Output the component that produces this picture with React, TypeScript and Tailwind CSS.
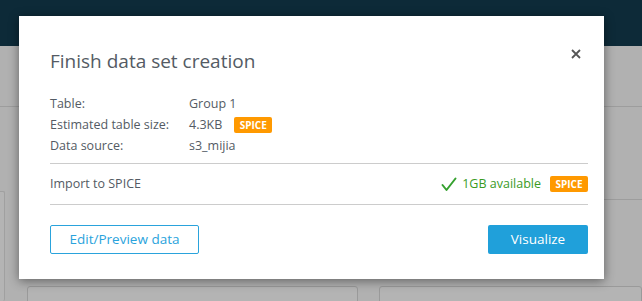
import React from "react";

const font = { fontFamily: '"Open Sans", "Noto Sans", Arial, sans-serif' };

function SpiceBadge() {
  return (
    <span className="inline-flex h-[16px] w-[38px] items-center justify-center rounded-[2px] bg-[#ff9900] text-[10px] font-bold leading-none text-white">
      SPICE
    </span>
  );
}

function CheckIcon() {
  return (
    <svg width="16" height="15" viewBox="0 0 16 15" fill="none">
      <path d="M1.5 8 L5.5 13 L14.5 1.5" stroke="#35a12f" strokeWidth="2" strokeLinecap="round" strokeLinejoin="round" />
    </svg>
  );
}

export default function App() {
  return (
    <div className="relative h-[301px] w-[642px] overflow-hidden bg-[#b1b1b1]" style={font}>
      {/* page behind the overlay */}
      <div className="h-[46px] bg-[#0d2a38]" />
      <div className="flex flex-col">
        <div className="h-[61px] border-b border-[#9d9d9d] bg-[#b1b1b1]" />
        <div className="flex h-[93px]">
          <div className="flex-1" />
          <div className="w-[40px] border-b border-[#9d9d9d]" />
        </div>
        <div className="flex h-[101px]">
          <div className="mt-[-9px] w-[5px] rounded-r-[2px] border-r border-t border-[#a0a0a0] bg-[#b4b4b4]" />
          <div className="flex-1 pl-[22px] pt-[86px]">
            <div className="flex gap-[21px]">
              <div className="h-[30px] w-[331px] rounded-[3px] border border-[#9a9a9a] bg-[#b4b4b4]" />
              <div className="h-[30px] flex-1 rounded-[3px] border border-[#9a9a9a] bg-[#b4b4b4]" />
            </div>
          </div>
        </div>
      </div>

      {/* modal */}
      <div className="absolute left-[19px] top-[16px] h-[263px] w-[585px] bg-white shadow-[0_2px_10px_rgba(0,0,0,0.45)]">
        <div className="pl-[31px] pr-[16px] pt-[32px]">
          <div className="flex items-start justify-between">
            <h2 className="text-[19px] leading-[26px] text-[#545b64]">Finish data set creation</h2>
            <button className="mr-[7px] mt-[1px]" aria-label="Close">
              <svg width="10" height="10" viewBox="0 0 10 10">
                <path d="M1 1 L9 9 M9 1 L1 9" stroke="#555" strokeWidth="1.8" />
              </svg>
            </button>
          </div>

          <div className="mt-[19px] grid grid-cols-[139px_1fr] text-[12.5px] leading-[21px] text-[#545b64]">
            <span>Table:</span>
            <span>Group 1</span>
            <span>Estimated table size:</span>
            <span className="flex items-center gap-[12px]">
              4.3KB <SpiceBadge />
            </span>
            <span>Data source:</span>
            <span>s3_mijia</span>
          </div>

          <div className="mt-[7px] flex h-[42px] items-center justify-between border-y border-[#cccccc] text-[12.5px] text-[#545b64]">
            <span>Import to SPICE</span>
            <span className="flex items-center">
              <CheckIcon />
              <span className="ml-[5px] text-[#3a9b1f]">1GB available</span>
              <span className="ml-[9px]">
                <SpiceBadge />
              </span>
            </span>
          </div>

          <div className="mt-[20px] flex items-center justify-between">
            <button className="h-[29px] w-[149px] rounded-[2px] border border-[#2aa3dc] text-[13.5px] text-[#2aa3dc]">
              Edit/Preview data
            </button>
            <button className="h-[29px] w-[100px] rounded-[2px] bg-[#20a0da] text-[13.5px] text-white">
              Visualize
            </button>
          </div>
        </div>
      </div>
    </div>
  );
}
